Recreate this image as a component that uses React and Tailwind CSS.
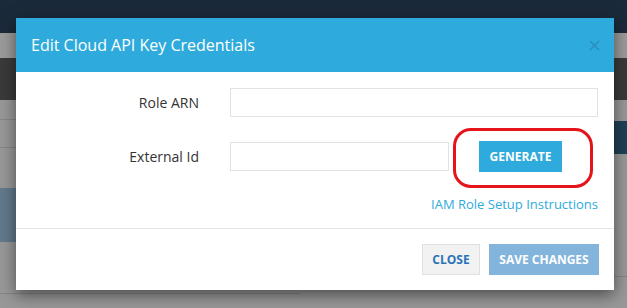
import React from "react";

const BackdropLeft = () => (
  <div className="flex flex-col">
    <div className="h-[20px] bg-[#989898] border-b border-[#868686]" />
    <div className="h-[28px] bg-[#989898] border-b border-[#868686]" />
    <div className="h-[40px] bg-[#989898]" />
    <div className="h-[54px] bg-[#637a8c]" />
    <div className="h-[52px] bg-[#989898] border-b border-[#868686]" />
    <div className="h-[20px] bg-[#989898]" />
  </div>
);

const BackdropRight = () => (
  <div className="flex flex-col">
    <div className="h-[21px] bg-[#989898]" />
    <div className="h-[33px] bg-[#1e4055]" />
    <div className="h-[123px] bg-[#989898] border-b border-[#868686]" />
    <div className="h-[40px] bg-[#989898]" />
  </div>
);

const Field = ({ label, children }) => (
  <div className="flex items-center">
    <label className="w-[168px] text-right text-[14px] text-[#333]">{label}</label>
    <div className="ml-[31px] flex flex-1 items-center">{children}</div>
  </div>
);

export default function App() {
  return (
    <div
      className="relative w-[627px] h-[308px] overflow-hidden bg-[#989898]"
      style={{ fontFamily: '"Open Sans", "Liberation Sans", sans-serif' }}
    >
      {/* page behind the dimmed overlay */}
      <div className="h-[33px] bg-[#1b2a3a]" />
      <div className="h-[25px] bg-[#9b9b9b]" />
      <div className="h-[42px] bg-[#3a3a3a]" />
      <div className="grid grid-cols-[300px_1fr]">
        <BackdropLeft />
        <BackdropRight />
      </div>

      {/* modal */}
      <div className="absolute left-[16px] top-[18px] w-[598px] bg-white shadow-[0_5px_15px_rgba(0,0,0,0.5)]">
        <div className="flex h-[54px] items-center justify-between bg-[#2eabdc] pl-[15px] pr-[15px]">
          <h4 className="text-[16px] text-white">Edit Cloud API Key Credentials</h4>
          <svg width="11" height="11" viewBox="0 0 11 11" className="mr-[-1px]">
            <path d="M1 1L10 10M10 1L1 10" stroke="#2a8cb8" strokeWidth="1.4" />
          </svg>
        </div>

        <div className="flex flex-col pl-[15px] pr-[16px] pt-[16px] pb-[15px]">
          <Field label="Role ARN">
            <input className="h-[29px] w-full border border-[#e2e2e2] outline-none" />
          </Field>
          <div className="mt-[24px]">
            <Field label="External Id">
              <input className="h-[29px] w-[219px] border border-[#e2e2e2] outline-none" />
              <button className="ml-[30px] h-[31px] w-[83px] bg-[#2eabdc] text-[12px] font-bold text-white">
                GENERATE
              </button>
            </Field>
          </div>
          <div className="mt-[23px] flex justify-end">
            <a className="text-[13px] leading-[18px] text-[#2eabdc]">IAM Role Setup Instructions</a>
          </div>
        </div>

        <div className="flex justify-end gap-[9px] border-t border-[#e5e5e5] pt-[15px] pb-[15px] pr-[15px]">
          <button className="h-[31px] w-[58px] border border-[#e0e0e0] bg-[#f2f2f2] text-[12px] font-bold text-[#2a73b8]">
            CLOSE
          </button>
          <button className="h-[31px] w-[110px] bg-[#82b4dc] text-[12px] font-bold text-white">
            SAVE CHANGES
          </button>
        </div>

        {/* red annotation around the generate button */}
        <div className="absolute left-[437px] top-[110px] h-[60px] w-[140px] rounded-[18px] border-[3px] border-[#e5141b]" />
      </div>
    </div>
  );
}
